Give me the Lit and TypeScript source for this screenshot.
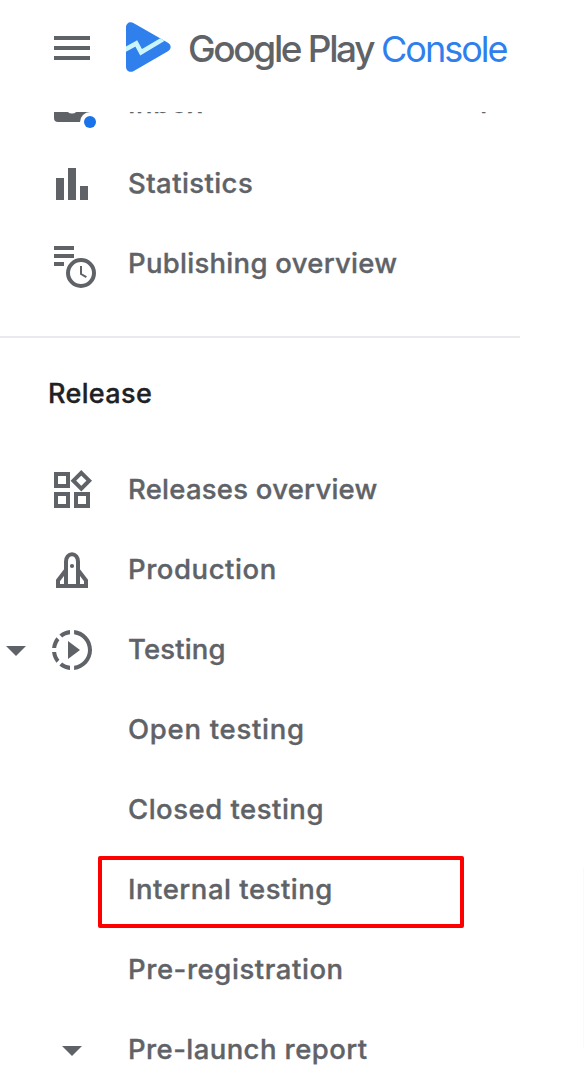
import { LitElement, html, svg, css, nothing, TemplateResult } from "lit";
import { customElement } from "lit/decorators.js";
import { classMap } from "lit/directives/class-map.js";

interface NavItem {
  label: string;
  spacing: number;
  icon?: TemplateResult;
  caret?: "outer" | "inner";
  badge?: string;
  highlighted?: boolean;
}

const inbox = svg`
  <path d="M6 10a4 4 0 0 1 4-4h28a4 4 0 0 1 4 4v28a4 4 0 0 1-4 4H10a4 4 0 0 1-4-4z"/>
  <path d="M10 10h28v18h-8a6 5.600 0 0 1-12 0h-8z" fill="#fff"/>
  <circle cx="42" cy="42" r="10" fill="#fff"/><circle cx="42" cy="42" r="6" fill="#1a73e8"/>`;
const statistics = svg`<path d="M8 18h8v22H8zM20 8h8v32h-8zM32 26h8v14h-8z"/>`;
const publishing = svg`
  <path d="M6 6h20v4H6zM6 14h20v4H6zM6 22h10v4H6z"/>
  <circle cx="33" cy="33" r="13" fill="#fff" stroke="currentColor" stroke-width="4"/>
  <path d="M33 26v8l5.4 3.2" fill="none" stroke="currentColor" stroke-width="2"/>`;
const releases = svg`
  <g fill="none" stroke="currentColor" stroke-width="4">
    <path d="M8 8h12v12H8zM8 28h12v12H8zM28 28h12v12H28z"/>
    <path d="M33.3 6.8l7.9 7.9-7.9 7.9-7.9-7.9z"/>
  </g>`;
const rocket = svg`
  <g fill="none" stroke="currentColor" stroke-width="4">
    <path d="M18 40V15.500a6 7.300 0 0 1 12 0V40"/>
    <path d="M18 24l-8 10.500V40h28v-5.500L30 24"/>
  </g><circle cx="24" cy="20" r="2.100"/>`;
const testing = svg`<path transform="scale(2)" d="M10 7.5v9l6-4.500zM11 4.070V2.050c-2.010.2-3.840 1-5.320 2.210L7.100 5.690c1.110-.86 2.440-1.440 3.900-1.620zM5.690 7.100L4.260 5.680C3.050 7.160 2.250 8.990 2.050 11h2.020c.18-1.460.76-2.790 1.620-3.900zM4.070 13H2.050c.2 2.010 1 3.840 2.210 5.320l1.430-1.430c-.86-1.100-1.440-2.430-1.620-3.890zm1.610 6.740C7.160 20.950 9 21.750 11 21.950v-2.020c-1.460-.18-2.790-.76-3.900-1.620l-1.420 1.430zM22 12c0 5.160-3.920 9.420-8.950 9.950v-2.020C16.970 19.410 20 16.050 20 12s-3.030-7.410-6.950-7.930V2.050C18.080 2.580 22 6.840 22 12z"/>`;

const general: NavItem[] = [
  { label: "Inbox", spacing: 0.55, icon: inbox, badge: "1" },
  { label: "Statistics", spacing: 0.42, icon: statistics },
  { label: "Publishing overview", spacing: 0.28, icon: publishing },
];

const release: NavItem[] = [
  { label: "Releases overview", spacing: 0.24, icon: releases },
  { label: "Production", spacing: 0.55, icon: rocket },
  { label: "Testing", spacing: 0.15, icon: testing, caret: "outer" },
  { label: "Open testing", spacing: 0.72 },
  { label: "Closed testing", spacing: 0.5 },
  { label: "Internal testing", spacing: 0.52, highlighted: true },
  { label: "Pre-registration", spacing: 0.57 },
  { label: "Pre-launch report", spacing: 0.42, caret: "inner" },
];

@customElement("app-root")
export class AppRoot extends LitElement {
  static styles = css`
    :host {
      display: flex;
      height: 1084px;
      overflow: hidden;
      background: #fff;
      color: #5f6368;
      font-family: Inter, "Open Sans", sans-serif;
    }
    svg { display: block; fill: currentColor; }
    .panel { width: 583px; display: flex; flex-direction: column; }
    .edge { width: 1px; height: 180px; margin-top: 868px; background: #fafafa; }
    header { height: 112px; flex: none; display: flex; align-items: flex-start; }
    .menu { width: 36px; height: 24px; margin: 36px 0 0 54px; }
    .logo { width: 46px; height: 52px; margin: 21px 0 0 35px; }
    .brand {
      margin: 25px 0 0 17px;
      display: flex;
      align-items: baseline;
      line-height: 48px;
      white-space: nowrap;
    }
    .google { width: 193px; font-size: 37px; font-weight: 500; letter-spacing: -2.35px; }
    .console { font-size: 36px; color: #2f80ed; font-weight: 400; letter-spacing: -2px; }
    .scroller { height: 953px; overflow: hidden; }
    nav { margin-top: -48px; }
    .group { display: flex; flex-direction: column; }
    .row {
      position: relative;
      height: 80px;
      display: grid;
      grid-template-columns: 48px 80px 348px 1fr;
      align-items: center;
    }
    .icon { width: 48px; height: 48px; }
    .slot { display: flex; align-items: center; }
    .caret { width: 20px; height: 10px; margin: 2px 0 0 6px; }
    .inner { margin-left: 14px; }
    .label, .badge {
      font-size: 27.5px;
      font-weight: 550;
      line-height: 40px;
      padding-bottom: 2px;
      white-space: nowrap;
      -webkit-text-stroke: 0.35px currentColor;
    }
    .highlighted::after {
      content: "";
      position: absolute;
      left: 98px;
      top: 6px;
      width: 366px;
      height: 72px;
      box-sizing: border-box;
      border: 4px solid #f00;
      border-radius: 2px;
    }
    .divider { width: 520px; height: 2px; margin-top: 32px; background: #e8eaed; }
    h2 {
      margin: 36px 0 36px 48px;
      font-size: 27px;
      font-weight: 550;
      line-height: 40px;
      letter-spacing: 0.35px;
      color: #202124;
      -webkit-text-stroke: 0.35px currentColor;
    }
  `;

  private caret(kind: string) {
    return html`<svg class=${classMap({ caret: true, inner: kind === "inner" })} viewBox="0 0 20 10">
      <path d="M0 0h20L10 10z"/>
    </svg>`;
  }

  private row(item: NavItem) {
    return html`
      <div class=${classMap({ row: true, highlighted: !!item.highlighted })}>
        <div class="slot">${item.caret === "outer" ? this.caret("outer") : nothing}</div>
        <div class="slot">
          ${item.icon ? html`<svg class="icon" viewBox="0 0 48 48">${item.icon}</svg>` : nothing}
          ${item.caret === "inner" ? this.caret("inner") : nothing}
        </div>
        <div class="label" style="letter-spacing:${item.spacing}px">${item.label}</div>
        <div class="badge">${item.badge ?? nothing}</div>
      </div>`;
  }

  render() {
    return html`
      <div class="panel">
        <header>
          <svg class="menu" viewBox="0 0 36 24"><path d="M0 0h36v4H0zM0 10h36v4H0zM0 20h36v4H0z"/></svg>
          <svg class="logo" viewBox="0 0 46 52">
            <defs><clipPath id="tri"><path d="M1 6.500C1 2.200 5 0 8.800 2.200L42.500 21.500c4.200 2.400 4.200 6.600 0 9L8.800 50C5 52.200 1 50 1 45.800z"/></clipPath></defs>
            <g clip-path="url(#tri)">
              <path d="M0 0h46v52H0z" fill="#2f80ed"/>
              <path d="M-1 29.300L11.300 22.500l4.800 8.800L39 17.600" fill="none" stroke="#cbf5fd" stroke-width="4.600"/>
            </g>
          </svg>
          <div class="brand"><span class="google">Google Play</span><span class="console">Console</span></div>
        </header>
        <div class="scroller">
          <nav>
            <div class="group">${general.map((i) => this.row(i))}</div>
            <div class="divider"></div>
            <h2>Release</h2>
            <div class="group">${release.map((i) => this.row(i))}</div>
          </nav>
        </div>
      </div>
      <div class="edge"></div>`;
  }
}
